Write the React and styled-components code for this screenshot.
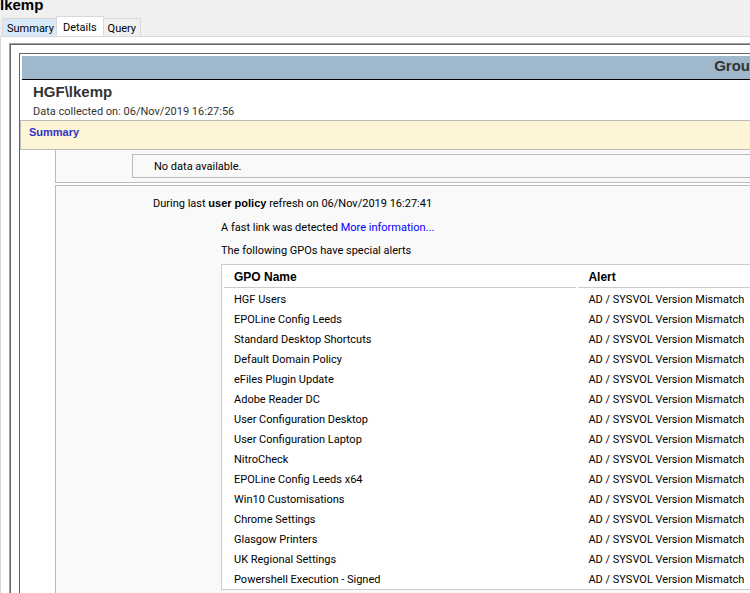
import styled, { createGlobalStyle } from 'styled-components'

const GlobalStyle = createGlobalStyle`
    * {
        box-sizing: border-box;
    }

    body {
        margin: 0;
        background-color: #f0f0f0;
        color: #000000;
        font-family: Roboto, "Liberation Sans", sans-serif;
        font-size: 11px;
        line-height: 16px;
    }
`

const Page = styled.div`
    display: flex;
    flex-direction: column;
    min-height: 100vh;
    overflow: hidden;
`

const UserName = styled.h1`
    height: 16px;
    margin: 0;
    font-family: "Liberation Sans", sans-serif;
    font-size: 15px;
    line-height: 10px;
`

const TabBar = styled.nav`
    display: flex;
    align-items: flex-end;
    height: 20px;
    padding-left: 2px;
`

const Tab = styled.button`
    height: ${({ $active }) => ($active ? '21px' : '18px')};
    margin-bottom: ${({ $active }) => ($active ? '-1px' : '0')};
    padding: ${({ $active, $hot }) => ($active ? '0 6px' : $hot ? '2px 2px 0 4px' : '2px 4px 0')};
    border: 1px solid #d9d9d9;
    border-bottom: 0;
    border-left-width: ${({ $joined }) => ($joined ? '0' : '1px')};
    border-right-width: ${({ $hot }) => ($hot ? '0' : '1px')};
    background-color: ${({ $active, $hot }) => ($active ? '#ffffff' : $hot ? '#d8eaf9' : '#f0f0f0')};
    color: #000000;
    font-family: inherit;
    font-size: 11px;
    line-height: 15px;
`

const TabPanel = styled.main`
    display: flex;
    flex: 1;
    padding: 6px 0 0 8px;
    border-top: 1px solid #d9d9d9;
    border-left: 1px solid #d9d9d9;
    background-color: #ffffff;
`

const BrowserFrame = styled.div`
    display: flex;
    flex: 1;
    min-width: 0;
    padding: 9px 0 0 9px;
    border-top: 1px solid #a0a0a0;
    border-left: 1px solid #a0a0a0;
    box-shadow: inset 1px 1px #696969;
`

const Report = styled.article`
    display: flex;
    flex-direction: column;
    flex: 1;
    min-width: 0;
    border-top: 1px solid #666666;
    border-left: 1px solid #666666;
`

const ReportTitle = styled.h2`
    height: 24px;
    margin: 2px 0 0 2px;
    border-bottom: 1px solid #000000;
    background-color: #a0b8cc;
    color: #333333;
    font-family: "Liberation Sans", sans-serif;
    font-size: 15px;
    line-height: 20px;
    text-align: right;
`

const ReportInfo = styled.header`
    height: 40px;
    padding: 4px 0 0 13px;
    color: #333333;
`

const ReportUser = styled.h3`
    margin: 0;
    font-family: "Liberation Sans", sans-serif;
    font-size: 15px;
    line-height: 16px;
`

const Collected = styled.p`
    margin: 4px 0 0;
`

const SectionTitle = styled.h3`
    height: 30px;
    margin: 0;
    padding: 3px 8px;
    border: 1px solid #bbbbbb;
    border-right: 0;
    background-color: #fdf5d5;
    color: #3333cc;
    font-family: "Liberation Sans", sans-serif;
    font-size: 11px;
    line-height: 16px;
`

const Container = styled.section`
    flex: ${({ $fill }) => ($fill ? '1' : 'none')};
    margin-left: 35px;
    padding: ${({ $fill }) => ($fill ? '9px 0 3px 97px' : '4px 0 4px 76px')};
    border-left: 1px solid #bbbbbb;
    border-top: ${({ $fill }) => ($fill ? '1px solid #bbbbbb' : '0')};
    border-bottom: ${({ $fill }) => ($fill ? '0' : '1px solid #bbbbbb')};
    margin-top: ${({ $fill }) => ($fill ? '2px' : '0')};
    background-color: #f9f9f9;
`

const EmptyBox = styled.p`
    margin: 0;
    padding: 4px 21px 2px;
    border: 1px solid #bbbbbb;
    border-right: 0;
`

const Refresh = styled.p`
    margin: 0;
`

const Policy = styled.b`
    font-family: "Liberation Sans", sans-serif;
`

const Detail = styled.div`
    padding: 8px 0 0 68px;
`

const Line = styled.p`
    margin: 0 0 7px;

    &:last-of-type {
        margin-bottom: 5px;
    }
`

const MoreLink = styled.a`
    color: #0000ff;
    text-decoration: none;

    &:hover {
        text-decoration: underline;
    }
`

const AlertTable = styled.table`
    width: calc(100% + 4px);
    border: 1px solid #cccccc;
    border-right: 0;
    border-spacing: 2px 1px;
    background-color: #ffffff;
    table-layout: fixed;
`

const HeadCell = styled.th`
    width: ${({ $wide }) => ($wide ? '67%' : 'auto')};
    height: 22px;
    padding: 0 0 0 10px;
    border-bottom: 1px solid #cccccc;
    font-family: "Liberation Sans", sans-serif;
    font-size: 12px;
    text-align: left;
`

const Cell = styled.td`
    height: 19px;
    padding: 2px 0 0 10px;
    white-space: nowrap;
`

const gpos = [
    'HGF Users',
    'EPOLine Config Leeds',
    'Standard Desktop Shortcuts',
    'Default Domain Policy',
    'eFiles Plugin Update',
    'Adobe Reader DC',
    'User Configuration Desktop',
    'User Configuration Laptop',
    'NitroCheck',
    'EPOLine Config Leeds x64',
    'Win10 Customisations',
    'Chrome Settings',
    'Glasgow Printers',
    'UK Regional Settings',
    'Powershell Execution - Signed',
]

function Alerts() {
    return (
        <AlertTable>
            <thead>
                <tr>
                    <HeadCell $wide>GPO Name</HeadCell>
                    <HeadCell>Alert</HeadCell>
                </tr>
            </thead>
            <tbody>
                {gpos.map((gpo) => (
                    <tr key={gpo}>
                        <Cell>{gpo}</Cell>
                        <Cell>AD / SYSVOL Version Mismatch</Cell>
                    </tr>
                ))}
            </tbody>
        </AlertTable>
    )
}

function App() {
    return (
        <Page>
            <GlobalStyle />
            <UserName>lkemp</UserName>
            <TabBar>
                <Tab $hot>Summary</Tab>
                <Tab $active>Details</Tab>
                <Tab $joined>Query</Tab>
            </TabBar>
            <TabPanel>
                <BrowserFrame>
                    <Report>
                        <ReportTitle>Grou</ReportTitle>
                        <ReportInfo>
                            <ReportUser>HGF\lkemp</ReportUser>
                            <Collected>Data collected on: 06/Nov/2019 16:27:56</Collected>
                        </ReportInfo>
                        <SectionTitle>Summary</SectionTitle>
                        <Container>
                            <EmptyBox>No data available.</EmptyBox>
                        </Container>
                        <Container $fill>
                            <Refresh>During last <Policy>user policy</Policy> refresh on 06/Nov/2019 16:27:41</Refresh>
                            <Detail>
                                <Line>A fast link was detected <MoreLink href="#more">More information...</MoreLink></Line>
                                <Line>The following GPOs have special alerts</Line>
                                <Alerts />
                            </Detail>
                        </Container>
                    </Report>
                </BrowserFrame>
            </TabPanel>
        </Page>
    )
}

export default App
